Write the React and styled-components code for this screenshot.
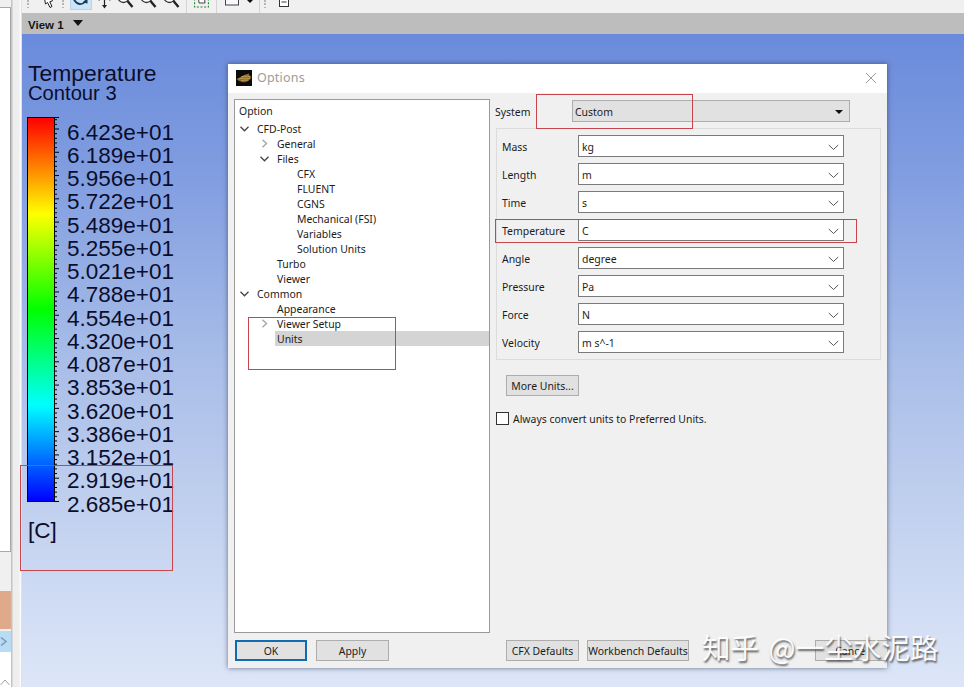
import React from "react";
import styled, { createGlobalStyle } from "styled-components";

const Global = createGlobalStyle`
  html, body { margin: 0; padding: 0; height: 100%; overflow: hidden; background: #f0f0f0; }
  #root { height: 100%; }
  * { box-sizing: border-box; }
`;

const Screen = styled.div`
  position: relative;
  display: flex;
  width: 964px;
  height: 687px;
  overflow: hidden;
  font-family: "Noto Sans", "Liberation Sans", sans-serif;
`;

/* ---------- left rail ---------- */
const Rail = styled.aside`
  display: flex;
  flex: 0 0 22px;
  height: 100%;
`;
const RailColumn = styled.div`
  display: flex;
  flex-direction: column;
  width: 11px;
  padding-top: 7px;
  background: #f0f0f0;
`;
const RailList = styled.div`
  flex: 0 0 545px;
  background: #fff;
  border-top: 1px solid #a8a8a8;
  border-right: 1px solid #a8a8a8;
  border-bottom: 1px solid #a8a8a8;
`;
const RailGap = styled.div`
  flex: 0 0 39px;
`;
const RailThumb = styled.div`
  flex: 0 0 ${(p) => p.$h}px;
  margin-bottom: ${(p) => p.$mb || 0}px;
  background: ${(p) => p.$bg};
  display: flex;
  align-items: center;
`;
const RailFill = styled.div`
  flex: 1;
  background: #fff;
  display: flex;
  align-items: flex-end;
  padding-bottom: 1px;
`;
const RailGutter = styled.div`
  width: 11px;
  background: linear-gradient(90deg, #c4c4c4 0, #c4c4c4 1px, #eeeeee 2px, #eeeeee 8px, #fafafa 9px, #fafafa 10px, #c9c9c9 11px);
`;

/* ---------- main ---------- */
const Main = styled.main`
  display: flex;
  flex-direction: column;
  flex: 1;
  min-width: 0;
`;
const Toolbar = styled.div`
  display: flex;
  align-items: flex-start;
  flex: 0 0 13px;
  height: 13px;
  overflow: hidden;
  background: #f0f0f0;
  padding-left: 5px;
`;
const ToolSlot = styled.div`
  flex: 0 0 ${(p) => p.$w}px;
  height: 10px;
  padding-bottom: 1px;
  margin-right: ${(p) => p.$mr || 0}px;
  background: ${(p) => (p.$active ? "#cce4f7" : "transparent")};
  border: ${(p) => (p.$active ? "1px solid #b5d4ee" : "none")};
  border-top: none;
  display: flex;
  justify-content: center;
  align-items: flex-end;
`;
const Grip = styled.div`
  flex: 0 0 2px;
  height: 8px;
  margin-right: ${(p) => p.$mr || 0}px;
  background: repeating-linear-gradient(180deg, #b5b5b5 0 2px, transparent 2px 3.5px);
`;
const ToolRule = styled.div`
  flex: 0 0 1px;
  height: 13px;
  margin-right: ${(p) => p.$mr || 0}px;
  background: #d4d4d4;
`;
const ViewBar = styled.div`
  display: flex;
  align-items: center;
  flex: 0 0 21px;
  background: #bdbdbd;
  padding: 2px 0 0 6px;
  gap: 9px;
  font: bold 11.5px "Liberation Sans", sans-serif;
  color: #151515;
`;
const Caret = styled.span`
  width: 0;
  height: 0;
  margin-top: -3px;
  border-left: 5px solid transparent;
  border-right: 5px solid transparent;
  border-top: 6px solid #111;
`;
const Viewport = styled.div`
  position: relative;
  flex: 1;
  background: linear-gradient(180deg, #6a8bdc 0%, #7f9ce0 20%, #a8bde8 50%, #c3d2ef 75%, #dde6f8 100%);
`;

/* ---------- legend ---------- */
const Legend = styled.div`
  display: flex;
  flex-direction: column;
  padding: 28px 0 0 5px;
  font-family: "Liberation Sans", sans-serif;
  color: #0a0e2c;
`;
const LegendTitle = styled.div`
  font-size: 22.9px;
  line-height: 22px;
  margin-left: 1px;
`;
const LegendSubtitle = styled.div`
  font-size: 20.2px;
  line-height: 18px;
  margin-left: 1px;
  margin-bottom: 15px;
`;
const ScaleRow = styled.div`
  display: flex;
  height: 385px;
`;
const ColorBar = styled.div`
  width: 28px;
  height: 385px;
  border: 1px solid #000;
  background: linear-gradient(180deg, #ff0000 0%, #ffff00 25%, #00ff00 50%, #00ffff 75%, #0000ff 100%);
`;
const TickSvg = styled.svg`
  width: 4px;
  height: 385px;
  display: block;
`;
const ScaleLabels = styled.div`
  display: flex;
  flex-direction: column;
  margin-left: 8px;
  padding-top: 3.6px;
  font-size: 22.5px;
  line-height: 23.25px;
  white-space: nowrap;
`;
const UnitLabel = styled.div`
  font-size: 22.5px;
  line-height: 24px;
  margin: 17px 0 0 1px;
`;

/* ---------- dialog ---------- */
const Dialog = styled.section`
  position: absolute;
  left: 206px;
  top: 30px;
  width: 659px;
  height: 604px;
  display: flex;
  flex-direction: column;
  background: #f0f0f0;
  box-shadow: 0 0 5px rgba(40, 50, 80, 0.65);
  font-size: 10.45px;
  color: #1c1c1c;
`;
const TitleBar = styled.header`
  display: flex;
  align-items: center;
  flex: 0 0 29px;
  background: #fff;
  padding: 0 10px 2px 8px;
`;
const TitleText = styled.span`
  margin-left: 5px;
  font-size: 12.5px;
  letter-spacing: 0.2px;
  color: #9c9c9c;
  flex: 1;
`;
const DialogBody = styled.div`
  flex: 1;
  min-height: 0;
  display: grid;
  grid-template-columns: 256px 1fr;
  grid-template-rows: 1fr auto;
  column-gap: 5px;
  padding: 6px 0 7px 6px;
`;
const Tree = styled.div`
  background: #fff;
  border: 1px solid #9a9a9a;
  padding: 3px 0 0;
  line-height: 15px;
`;
const TreeHeader = styled.div`
  padding: 1px 0 0 4px;
  height: 15px;
  margin-bottom: 3px;
`;
const TreeRow = styled.div`
  display: flex;
  align-items: center;
  height: 15px;
  padding-left: ${(p) => 4 + p.$level * 20}px;
`;
const ChevronSlot = styled.span`
  flex: 0 0 16px;
  height: 15px;
  display: flex;
  align-items: center;
  padding-left: 1px;
`;
const TreeLabel = styled.span`
  flex: 1;
  height: 15px;
  padding: 1px 0 0 2px;
  background: ${(p) => (p.$selected ? "#d4d4d4" : "transparent")};
`;
const RightPane = styled.div`
  display: flex;
  flex-direction: column;
  padding-top: 1px;
`;
const SystemRow = styled.div`
  display: flex;
  align-items: center;
  height: 22px;
  margin-bottom: 6px;
`;
const SystemLabel = styled.span`
  flex: 0 0 77px;
  padding-top: 2px;
`;
const SystemCombo = styled.div`
  display: flex;
  align-items: center;
  justify-content: space-between;
  width: 278px;
  height: 22px;
  padding: 2px 6px 0 2px;
  background: #e1e1e1;
  border: 1px solid #adadad;
`;
const SolidCaret = styled.span`
  width: 0;
  height: 0;
  border-left: 4px solid transparent;
  border-right: 4px solid transparent;
  border-top: 4px solid #111;
`;
const GroupBox = styled.div`
  display: flex;
  flex-direction: column;
  gap: 6px;
  width: 385px;
  margin-left: 1px;
  padding: 6px 4px 6px;
  border: 1px solid #dcdcdc;
`;
const UnitRow = styled.div`
  display: flex;
  align-items: center;
  height: 22px;
`;
const UnitName = styled.span`
  flex: 0 0 77px;
  padding: 2px 0 0 1px;
`;
const Combo = styled.div`
  display: flex;
  align-items: center;
  justify-content: space-between;
  width: 266px;
  height: 22px;
  padding: 2px 4px 0 3px;
  background: #fff;
  border: 1px solid #7a7a7a;
`;
const MoreRow = styled.div`
  margin: 15px 0 0 11px;
`;
const Button = styled.button`
  width: ${(p) => p.$w}px;
  height: 21px;
  padding: 0;
  margin: 0;
  font: inherit;
  color: #1c1c1c;
  background: #e1e1e1;
  border: ${(p) => (p.$primary ? "2px solid #0f6cb0" : "1px solid #adadad")};
  white-space: nowrap;
`;
const CheckRow = styled.label`
  display: flex;
  align-items: center;
  gap: 4px;
  margin: 16px 0 0 1px;
  height: 13px;
`;
const CheckBox = styled.span`
  width: 13px;
  height: 13px;
  background: #fff;
  border: 1px solid #333;
`;
const FooterLeft = styled.div`
  display: flex;
  gap: 9px;
  padding: 7px 0 0 1px;
`;
const FooterRight = styled.div`
  display: flex;
  gap: 8px;
  padding: 7px 0 0 11px;
`;
const FooterSpacer = styled.div`
  flex: 0 0 110px;
`;

/* ---------- overlays ---------- */
const Annotation = styled.div`
  position: absolute;
  left: ${(p) => p.$x}px;
  top: ${(p) => p.$y}px;
  width: ${(p) => p.$w}px;
  height: ${(p) => p.$h}px;
  border: 1px solid #c9454d;
  pointer-events: none;
`;
const Watermark = styled.div`
  position: absolute;
  left: 702px;
  top: 627px;
  font-family: "Noto Sans CJK SC", sans-serif;
  font-size: 28.6px;
  line-height: 40px;
  word-spacing: 3px;
  white-space: nowrap;
  color: rgba(255, 255, 255, 0.95);
  text-shadow: 1px 2px 2px rgba(60, 60, 60, 0.8);
`;

/* ---------- drawings ---------- */
const ChevronDown = () => (
  <svg width="9" height="6" viewBox="0 0 9 6" fill="none">
    <path d="M0.5 0.8 L4.5 4.8 L8.5 0.8" stroke="#444" strokeWidth="1.3" />
  </svg>
);
const ChevronUp = () => (
  <svg width="10" height="7" viewBox="0 0 10 7" fill="none">
    <path d="M0.5 6 L5 1 L9.5 6" stroke="#a0a0a0" strokeWidth="1" />
  </svg>
);
const ChevronRight = () => (
  <svg width="9" height="9" viewBox="0 0 9 9" fill="none">
    <path d="M2.5 0.8 L6.5 4.5 L2.5 8.2" stroke="#a6a6a6" strokeWidth="1.4" />
  </svg>
);
const ComboChevron = () => (
  <svg width="11" height="7" viewBox="0 0 11 7" fill="none">
    <path d="M0.8 1 L5.5 5.5 L10.2 1" stroke="#555" strokeWidth="1" />
  </svg>
);
const CloseIcon = () => (
  <svg width="12" height="12" viewBox="0 0 12 12" fill="none">
    <path d="M1 1 L11 11 M11 1 L1 11" stroke="#9a9a9a" strokeWidth="1" />
  </svg>
);
const RailClose = () => (
  <svg width="8" height="9" viewBox="0 0 8 9" fill="none">
    <path d="M1 0.5 L6 4.5 L1 8.5" stroke="#7d9db8" strokeWidth="1.6" />
  </svg>
);
const Logo = () => (
  <svg width="16" height="16" viewBox="0 0 16 16">
    <rect width="16" height="16" fill="#0b0b0b" />
    <path d="M0.5 9 C4 7.5 8 4.5 13 3.5 C12.5 5.5 15 6 15.5 7 C14 11 9 13 6 12 C4 11.5 2 10.5 0.5 9Z" fill="#8a6428" />
    <path d="M2.5 9 C6 8 9 8 14 8.5 M5 7 C8 6 10 6 14 6.5 M5 10.5 C8 10 10 10 12.5 10.2" stroke="#d9b76c" strokeWidth="0.7" fill="none" />
  </svg>
);
const Ticks = () => {
  const lines = [];
  const step = 23.28 / 5;
  for (let i = 0; i < 83; i++) {
    const y = 2.69 + i * step;
    if (y > 385) break;
    lines.push(<line key={i} x1="0" x2={i % 5 === 2 ? 4 : 2} y1={y} y2={y} stroke="#000" strokeWidth="1" />);
  }
  lines.push(<line key="top" x1="0" x2="4" y1="0.5" y2="0.5" stroke="#000" />);
  lines.push(<line key="bot" x1="0" x2="4" y1="384.5" y2="384.5" stroke="#000" />);
  return <TickSvg viewBox="0 0 4 385">{lines}</TickSvg>;
};
const CursorIcon = () => (
  <svg width="11" height="13" viewBox="0 0 11 13" fill="none">
    <path d="M1 0 L2.5 8 L4.5 6.5 L7 11.5 L9 10.5 L6.8 5.8 L9.5 4.8 L3 -3 Z" fill="#fff" stroke="#222" strokeWidth="1" />
  </svg>
);
const RotateIcon = () => (
  <svg width="16" height="10" viewBox="0 0 16 10" fill="none">
    <path d="M1 1.5 C4 7 9 7.5 13 3" stroke="#143a5c" strokeWidth="1.8" />
    <path d="M14.5 0 L14.5 5.5 L9.5 4.5 Z" fill="#143a5c" />
  </svg>
);
const PanIcon = () => (
  <svg width="15" height="13" viewBox="0 0 15 13" fill="none">
    <path d="M7.5 -1 V10 M1 3 H14" stroke="#222" strokeWidth="1.2" />
    <path d="M5 9 L7.5 12.5 L10 9 Z M2.5 1 L0 3 L2.5 5 Z M12.5 1 L15 3 L12.5 5 Z" fill="#222" />
  </svg>
);
const ZoomIcon = ({ dot }) => (
  <svg width="17" height="13" viewBox="0 0 17 13" fill="none">
    <circle cx="6.5" cy="1" r="5.5" fill="#fff" stroke="#333" strokeWidth="1.3" />
    <path d="M4 1 H9 M6.5 -1 V3.5" stroke={dot ? "#1a6" : "#444"} strokeWidth="1" />
    <path d="M10.5 5 L15.5 11" stroke="#222" strokeWidth="2.4" />
  </svg>
);
const DashedIcon = () => (
  <svg width="15" height="13" viewBox="0 0 15 13" fill="none">
    <rect x="0.5" y="-5" width="14" height="16" stroke="#1d8a2a" strokeWidth="1.2" strokeDasharray="2 1.6" />
    <path d="M4 -3 H10 L11 7 H5 Z" fill="#fff" stroke="#444" strokeWidth="1" />
  </svg>
);
const BoxIcon = () => (
  <svg width="14" height="13" viewBox="0 0 14 13" fill="none">
    <rect x="0.5" y="-4" width="13" height="13" fill="#f7f8ff" stroke="#444" />
  </svg>
);
const ListIcon = () => (
  <svg width="13" height="13" viewBox="0 0 13 13" fill="none">
    <rect x="3.5" y="-1" width="9" height="11.5" fill="#fff" stroke="#333" />
    <path d="M5.5 3 H10.5 M5.5 6 H10.5" stroke="#333" />
    <rect x="0" y="1" width="2" height="2" fill="#222" />
  </svg>
);
const SmallCaret = styled(SolidCaret)`
  margin-bottom: 6px;
`;

const treeItems = [
  { t: "CFD-Post", l: 0, c: "down" },
  { t: "General", l: 1, c: "right" },
  { t: "Files", l: 1, c: "down" },
  { t: "CFX", l: 2 },
  { t: "FLUENT", l: 2 },
  { t: "CGNS", l: 2 },
  { t: "Mechanical (FSI)", l: 2 },
  { t: "Variables", l: 2 },
  { t: "Solution Units", l: 2 },
  { t: "Turbo", l: 1 },
  { t: "Viewer", l: 1 },
  { t: "Common", l: 0, c: "down" },
  { t: "Appearance", l: 1 },
  { t: "Viewer Setup", l: 1, c: "right" },
  { t: "Units", l: 1, s: true },
];
const units = [
  ["Mass", "kg"],
  ["Length", "m"],
  ["Time", "s"],
  ["Temperature", "C"],
  ["Angle", "degree"],
  ["Pressure", "Pa"],
  ["Force", "N"],
  ["Velocity", "m s^-1"],
];
const scale = [
  "6.423e+01", "6.189e+01", "5.956e+01", "5.722e+01", "5.489e+01", "5.255e+01",
  "5.021e+01", "4.788e+01", "4.554e+01", "4.320e+01", "4.087e+01", "3.853e+01",
  "3.620e+01", "3.386e+01", "3.152e+01", "2.919e+01", "2.685e+01",
];

export default function App() {
  return (
    <Screen>
      <Global />
      <Rail>
        <RailColumn>
          <RailList />
          <RailGap />
          <RailThumb $h={38} $mb={2} $bg="#dfa98c" />
          <RailThumb $h={21} $bg="#b9dcf5">
            <RailClose />
          </RailThumb>
          <RailFill>
            <ChevronUp />
          </RailFill>
        </RailColumn>
        <RailGutter />
      </Rail>
      <Main>
        <Toolbar>
          <Grip $mr={14} />
          <ToolSlot $w={11} $mr={8}><CursorIcon /></ToolSlot>
          <Grip $mr={6} />
          <ToolSlot $w={22} $mr={4} $active><RotateIcon /></ToolSlot>
          <ToolSlot $w={16} $mr={5}><PanIcon /></ToolSlot>
          <ToolSlot $w={17} $mr={6}><ZoomIcon /></ToolSlot>
          <ToolSlot $w={17} $mr={6}><ZoomIcon /></ToolSlot>
          <ToolSlot $w={17} $mr={6}><ZoomIcon dot /></ToolSlot>
          <ToolRule $mr={7} />
          <ToolSlot $w={15} $mr={7}><DashedIcon /></ToolSlot>
          <ToolRule $mr={8} />
          <ToolSlot $w={14} $mr={7}><BoxIcon /></ToolSlot>
          <ToolSlot $w={8} $mr={5}><SmallCaret /></ToolSlot>
          <ToolRule $mr={4} />
          <Grip $mr={10} />
          <ToolSlot $w={13}><ListIcon /></ToolSlot>
        </Toolbar>
        <ViewBar>
          View 1 <Caret />
        </ViewBar>
        <Viewport>
          <Legend>
            <LegendTitle>Temperature</LegendTitle>
            <LegendSubtitle>Contour 3</LegendSubtitle>
            <ScaleRow>
              <ColorBar />
              <Ticks />
              <ScaleLabels>
                {scale.map((s) => (
                  <div key={s}>{s}</div>
                ))}
              </ScaleLabels>
            </ScaleRow>
            <UnitLabel>[C]</UnitLabel>
          </Legend>
          <Dialog>
            <TitleBar>
              <Logo />
              <TitleText>Options</TitleText>
              <CloseIcon />
            </TitleBar>
            <DialogBody>
              <Tree>
                <TreeHeader>Option</TreeHeader>
                {treeItems.map((it) => (
                  <TreeRow key={it.t} $level={it.l}>
                    <ChevronSlot>
                      {it.c === "down" && <ChevronDown />}
                      {it.c === "right" && <ChevronRight />}
                    </ChevronSlot>
                    <TreeLabel $selected={it.s}>{it.t}</TreeLabel>
                  </TreeRow>
                ))}
              </Tree>
              <RightPane>
                <SystemRow>
                  <SystemLabel>System</SystemLabel>
                  <SystemCombo>
                    Custom
                    <SolidCaret />
                  </SystemCombo>
                </SystemRow>
                <GroupBox>
                  {units.map(([n, v]) => (
                    <UnitRow key={n}>
                      <UnitName>{n}</UnitName>
                      <Combo>
                        {v}
                        <ComboChevron />
                      </Combo>
                    </UnitRow>
                  ))}
                </GroupBox>
                <MoreRow>
                  <Button $w={73}>More Units...</Button>
                </MoreRow>
                <CheckRow>
                  <CheckBox />
                  Always convert units to Preferred Units.
                </CheckRow>
              </RightPane>
              <FooterLeft>
                <Button $w={72} $primary>OK</Button>
                <Button $w={73}>Apply</Button>
              </FooterLeft>
              <FooterRight>
                <Button $w={73}>CFX Defaults</Button>
                <Button $w={102}>Workbench Defaults</Button>
                <FooterSpacer />
                <Button $w={73}>Cancel</Button>
              </FooterRight>
            </DialogBody>
          </Dialog>
        </Viewport>
      </Main>
      <Annotation $x={20} $y={465} $w={153} $h={106} />
      <Annotation $x={248} $y={317} $w={148} $h={53} />
      <Annotation $x={536} $y={94} $w={157} $h={35} />
      <Annotation $x={495} $y={219} $w={362} $h={24} />
      <Watermark>知乎 @一尘水泥路</Watermark>
    </Screen>
  );
}
